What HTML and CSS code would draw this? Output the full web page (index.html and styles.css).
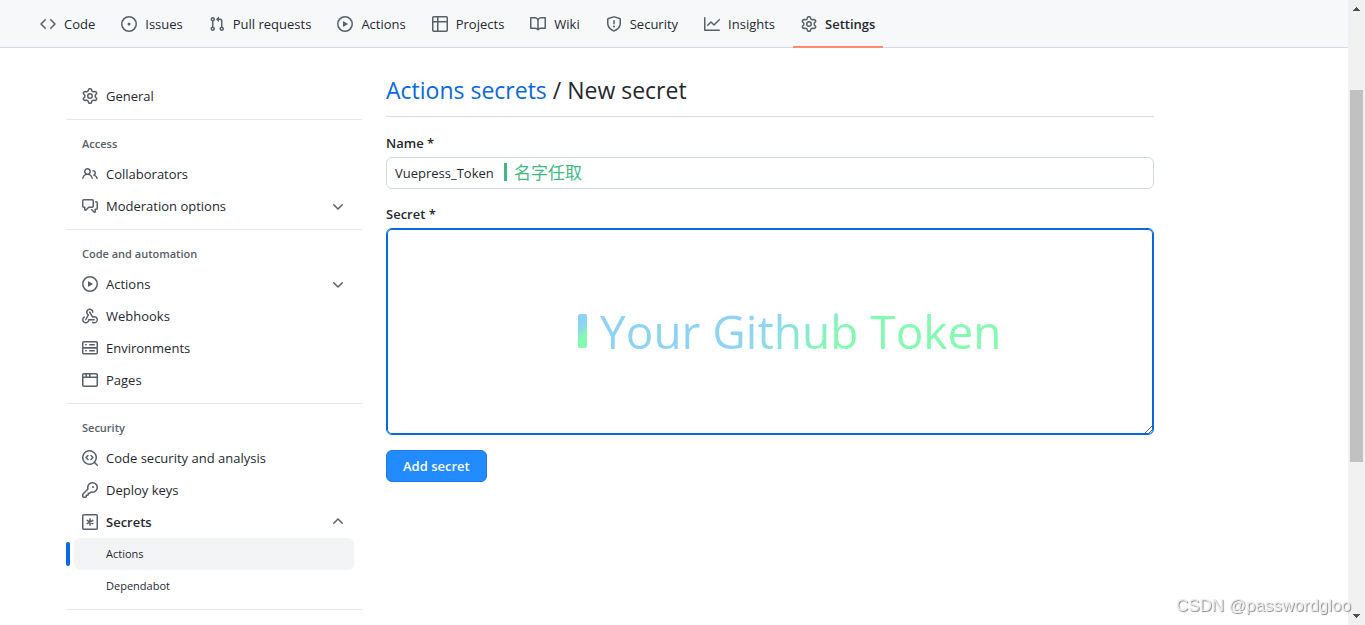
FILE: index.html
```html
<!DOCTYPE html>
<html lang="en">
  <head>
    <meta charset="utf-8" />
    <meta name="viewport" content="width=device-width, initial-scale=1" />
    <link rel="stylesheet" href="styles.css" />
    <title>New secret</title>
  </head>
  <body>
    <svg class="sprite" aria-hidden="true">
      <symbol id="code" viewBox="0 0 16 16"><path d="M4.72 3.22a.75.75 0 011.06 1.06L2.06 8l3.72 3.72a.75.75 0 11-1.06 1.06L.47 8.53a.75.75 0 010-1.06l4.25-4.25zm6.56 0a.75.75 0 10-1.06 1.06L13.94 8l-3.72 3.72a.75.75 0 101.06 1.06l4.25-4.25a.75.75 0 000-1.06l-4.25-4.25z" /></symbol>
      <symbol id="issue" viewBox="0 0 16 16"><path d="M8 9.5a1.5 1.5 0 100-3 1.5 1.5 0 000 3z" /><path d="M8 0a8 8 0 100 16A8 8 0 008 0zM1.5 8a6.5 6.5 0 1113 0 6.5 6.5 0 01-13 0z" fill-rule="evenodd" /></symbol>
      <symbol id="pull" viewBox="0 0 16 16"><path fill-rule="evenodd" d="M7.177 3.073L9.573.677A.25.25 0 0110 .854v4.792a.25.25 0 01-.427.177L7.177 3.427a.25.25 0 010-.354zM3.75 2.5a.75.75 0 100 1.5.75.75 0 000-1.5zm-2.25.75a2.25 2.25 0 113 2.122v5.256a2.251 2.251 0 11-1.5 0V5.372A2.25 2.25 0 011.5 3.25zM11 2.5h-1V4h1a1 1 0 011 1v5.628a2.251 2.251 0 101.5 0V5A2.5 2.5 0 0011 2.5zm1 10.25a.75.75 0 111.5 0 .75.75 0 01-1.5 0zM3.75 12a.75.75 0 100 1.5.75.75 0 000-1.5z" /></symbol>
      <symbol id="play" viewBox="0 0 16 16"><path fill-rule="evenodd" d="M1.5 8a6.5 6.5 0 1113 0 6.5 6.5 0 01-13 0zM8 0a8 8 0 100 16A8 8 0 008 0zM6.379 5.227A.25.25 0 006 5.442v5.117a.25.25 0 00.379.214l4.264-2.559a.25.25 0 000-.428L6.379 5.227z" /></symbol>
      <symbol id="table" viewBox="0 0 16 16"><g fill="none" stroke="currentColor" stroke-width="1.5"><rect x=".75" y=".75" width="14.5" height="14.5" rx="1" /><path d="M.75 5.75h14.5M5.75 .75v14.5" /></g></symbol>
      <symbol id="book" viewBox="0 0 16 16"><path fill-rule="evenodd" d="M0 1.75A.75.75 0 01.75 1h4.253c1.227 0 2.317.59 3 1.501A3.744 3.744 0 0111.006 1h4.245a.75.75 0 01.75.75v10.5a.75.75 0 01-.75.75h-4.507a2.25 2.25 0 00-1.591.659l-.622.621a.75.75 0 01-1.06 0l-.622-.621A2.25 2.25 0 005.258 13H.75a.75.75 0 01-.75-.75V1.75zm8.755 3a2.25 2.25 0 012.25-2.25H14.5v9h-3.757c-.71 0-1.4.201-1.992.572l.004-7.322zm-1.504 7.324l.004-5.073-.002-2.253A2.25 2.25 0 005.003 2.5H1.5v9h3.757a3.75 3.75 0 011.994.574z" /></symbol>
      <symbol id="shield" viewBox="0 0 16 16"><path fill-rule="evenodd" d="M7.467.133a1.75 1.75 0 011.066 0l5.25 1.68A1.75 1.75 0 0115 3.48V7c0 1.566-.32 3.182-1.303 4.682-.983 1.498-2.585 2.813-5.032 3.855a1.7 1.7 0 01-1.33 0c-2.447-1.042-4.049-2.357-5.032-3.855C1.32 10.182 1 8.566 1 7V3.48a1.75 1.75 0 011.217-1.667l5.25-1.68zm.61 1.429a.25.25 0 00-.153 0l-5.25 1.68a.25.25 0 00-.174.238V7c0 1.358.275 2.666 1.057 3.86.784 1.194 2.121 2.34 4.366 3.297a.2.2 0 00.154 0c2.245-.956 3.582-2.104 4.366-3.298C13.225 9.666 13.5 8.36 13.5 7V3.48a.25.25 0 00-.174-.237l-5.25-1.68zM9 10.5a1 1 0 11-2 0 1 1 0 012 0zm-.25-5.75a.75.75 0 10-1.5 0v3a.75.75 0 001.5 0v-3z" /></symbol>
      <symbol id="graph" viewBox="0 0 16 16"><path fill-rule="evenodd" d="M1.5 1.75a.75.75 0 00-1.5 0v12.5c0 .414.336.75.75.75h14.5a.75.75 0 000-1.5H1.5V1.75zm14.28 2.53a.75.75 0 00-1.06-1.06L10 7.94 7.53 5.47a.75.75 0 00-1.06 0L3.22 8.72a.75.75 0 001.06 1.06L7 7.06l2.47 2.47a.75.75 0 001.06 0l5.25-5.25z" /></symbol>
      <symbol id="gear" viewBox="0 0 16 16"><path fill-rule="evenodd" d="M7.429 1.525a6.593 6.593 0 011.142 0c.036.003.108.036.137.146l.289 1.105c.147.56.55.967.997 1.189.174.086.341.183.501.29.417.278.97.423 1.53.27l1.102-.303c.11-.03.175.016.195.046.219.31.41.641.573.989.014.031.022.11-.059.19l-.815.806c-.411.406-.562.957-.53 1.456a4.588 4.588 0 010 .582c-.032.499.119 1.05.53 1.456l.815.806c.08.08.073.159.059.19a6.494 6.494 0 01-.573.99c-.02.029-.086.074-.195.045l-1.103-.303c-.559-.153-1.112-.008-1.529.27-.16.107-.327.204-.5.29-.449.222-.851.628-.998 1.189l-.289 1.105c-.029.11-.101.143-.137.146a6.613 6.613 0 01-1.142 0c-.036-.003-.108-.037-.137-.146l-.289-1.105c-.147-.56-.55-.967-.997-1.189a4.502 4.502 0 01-.501-.29c-.417-.278-.97-.423-1.53-.27l-1.102.303c-.11.03-.175-.016-.195-.046a6.492 6.492 0 01-.573-.989c-.014-.031-.022-.11.059-.19l.815-.806c.411-.406.562-.957.53-1.456a4.587 4.587 0 010-.582c.032-.499-.119-1.05-.53-1.456l-.815-.806c-.08-.08-.073-.159-.059-.19a6.44 6.44 0 01.573-.99c.02-.029.086-.075.195-.045l1.103.303c.559.153 1.112.008 1.529-.27.16-.107.327-.204.5-.29.449-.222.851-.628.998-1.189l.289-1.105c.029-.11.101-.143.137-.146zM8 0c-.236 0-.47.01-.701.03-.743.065-1.29.615-1.458 1.261l-.29 1.106c-.017.066-.078.158-.211.224a5.994 5.994 0 00-.668.386c-.123.082-.233.09-.3.071L3.27 2.776c-.644-.177-1.392.02-1.82.63a7.977 7.977 0 00-.704 1.217c-.315.675-.111 1.422.363 1.891l.815.806c.05.048.098.147.088.294a6.084 6.084 0 000 .772c.01.147-.038.246-.088.294l-.815.806c-.474.469-.678 1.216-.363 1.891.2.428.436.835.704 1.218.428.609 1.176.806 1.82.63l1.103-.303c.066-.019.176-.011.299.071.213.143.436.272.668.386.133.066.194.158.212.224l.289 1.106c.169.646.715 1.196 1.458 1.26a8.094 8.094 0 001.402 0c.743-.064 1.29-.614 1.458-1.26l.29-1.106c.017-.066.078-.158.211-.224a5.98 5.98 0 00.668-.386c.123-.082.233-.09.3-.071l1.102.302c.644.177 1.392-.02 1.82-.63.268-.382.505-.789.704-1.217.315-.675.111-1.422-.364-1.891l-.814-.806c-.05-.048-.098-.147-.088-.294a6.1 6.1 0 000-.772c-.01-.147.039-.246.088-.294l.814-.806c.475-.469.679-1.216.364-1.891a7.992 7.992 0 00-.704-1.218c-.428-.609-1.176-.806-1.82-.63l-1.103.303c-.066.019-.176.011-.299-.071a5.991 5.991 0 00-.668-.386c-.133-.066-.194-.158-.212-.224L10.16 1.29C9.99.645 9.444.095 8.701.031A8.094 8.094 0 008 0zm1.5 8a1.5 1.5 0 11-3 0 1.5 1.5 0 013 0zM11 8a3 3 0 11-6 0 3 3 0 016 0z" /></symbol>
      <symbol id="people" viewBox="0 0 16 16"><path fill-rule="evenodd" d="M5.5 3.5a2 2 0 100 4 2 2 0 000-4zM2 5.5a3.5 3.5 0 115.898 2.549 5.507 5.507 0 013.034 4.084.75.75 0 11-1.482.235 4.001 4.001 0 00-7.9 0 .75.75 0 01-1.482-.236A5.507 5.507 0 013.102 8.05 3.49 3.49 0 012 5.5zM11 4a.75.75 0 100 1.5 1.5 1.5 0 01.666 2.844.75.75 0 00-.416.672v.352a.75.75 0 00.574.73c1.2.289 2.162 1.2 2.522 2.372a.75.75 0 101.434-.44 5.01 5.01 0 00-2.56-3.012A3 3 0 0011 4z" /></symbol>
      <symbol id="comments" viewBox="0 0 16 16"><path fill-rule="evenodd" d="M1.5 2.75a.25.25 0 01.25-.25h8.5a.25.25 0 01.25.25v5.5a.25.25 0 01-.25.25h-3.5a.75.75 0 00-.53.22L3.5 11.44V9.25a.75.75 0 00-.75-.75h-1a.25.25 0 01-.25-.25v-5.5zM1.75 1A1.75 1.75 0 000 2.75v5.5C0 9.216.784 10 1.75 10H2v1.543a1.457 1.457 0 002.487 1.03L7.061 10h3.189A1.75 1.75 0 0012 8.25v-5.5A1.75 1.75 0 0010.25 1h-8.5zM14.5 4.75a.25.25 0 00-.25-.25h-.5a.75.75 0 110-1.5h.5c.966 0 1.75.784 1.75 1.75v5.5A1.75 1.75 0 0114.25 12H14v1.543a1.457 1.457 0 01-2.487 1.03L9.22 12.28a.75.75 0 111.06-1.06l2.22 2.22v-2.19a.75.75 0 01.75-.75h1a.25.25 0 00.25-.25v-5.5z" /></symbol>
      <symbol id="webhook" viewBox="0 0 16 16"><path d="M5.5 4.25a2.25 2.25 0 014.5 0 .75.75 0 001.5 0 3.75 3.75 0 10-6.14 2.889l-2.272 4.258a.75.75 0 001.324.706L7 7.25a.75.75 0 00-.309-1.015A2.25 2.25 0 015.5 4.25z" /><path d="M7.364 3.607a.75.75 0 011.03.257l2.608 4.349a3.75 3.75 0 11-.628 6.785.75.75 0 01.752-1.299 2.25 2.25 0 10-.033-3.88.75.75 0 01-1.03-.256L7.107 4.636a.75.75 0 01.257-1.03z" /><path d="M2.9 8.776A.75.75 0 012.625 9.8 2.25 2.25 0 106 11.75a.75.75 0 01.75-.751h5.5a.75.75 0 010 1.5H7.425a3.751 3.751 0 11-5.55-3.998.75.75 0 011.024.274z" /></symbol>
      <symbol id="server" viewBox="0 0 16 16"><g fill="none" stroke="currentColor" stroke-width="1.5"><rect x=".75" y="1.75" width="14.5" height="6" rx="1" /><rect x=".75" y="7.75" width="14.5" height="6" rx="1" /><path stroke-linecap="round" d="M3.75 4.75h.5M7.75 4.75h4.5M3.75 10.75h.5M7.75 10.75h4.5" /></g></symbol>
      <symbol id="browser" viewBox="0 0 16 16"><path fill-rule="evenodd" d="M0 2.75C0 1.784.784 1 1.75 1h12.5c.966 0 1.75.784 1.75 1.75v10.5A1.75 1.75 0 0114.25 15H1.75A1.75 1.75 0 010 13.25V2.75zm1.75-.25a.25.25 0 00-.25.25V4.5h2v-2H1.75zM5 2.5v2h2v-2H5zm3.5 0v2h6V2.75a.25.25 0 00-.25-.25H8.5zm6 3.5h-13v7.25c0 .138.112.25.25.25h12.5a.25.25 0 00.25-.25V6z" /></symbol>
      <symbol id="codescan" viewBox="0 0 16 16"><path d="M8.47 4.97a.75.75 0 000 1.06L9.94 7.5 8.47 8.97a.75.75 0 101.06 1.06l2-2a.75.75 0 000-1.06l-2-2a.75.75 0 00-1.06 0zM6.53 6.03a.75.75 0 00-1.06-1.06l-2 2a.75.75 0 000 1.06l2 2a.75.75 0 101.06-1.06L5.06 7.5l1.47-1.47z" /><path fill-rule="evenodd" d="M12.246 13.307a7.5 7.5 0 111.06-1.06l2.474 2.473a.75.75 0 11-1.06 1.06l-2.474-2.473zM1.5 7.5a6 6 0 1110.386 4.094.75.75 0 00-.292.293A6 6 0 011.5 7.5z" /></symbol>
      <symbol id="key" viewBox="0 0 16 16"><path fill-rule="evenodd" d="M6.5 5.5a4 4 0 112.731 3.795.75.75 0 00-.768.18L7.44 10.5H6.25a.75.75 0 00-.75.75v1.19l-.06.06H4.25a.75.75 0 00-.75.75v1.19l-.06.06H1.75a.25.25 0 01-.25-.25v-1.69l5.024-5.023a.75.75 0 00.181-.768A3.995 3.995 0 016.5 5.5zm4-5.5a5.5 5.5 0 00-5.348 6.788L.22 11.72a.75.75 0 00-.22.53v2C0 15.216.784 16 1.75 16h2a.75.75 0 00.53-.22l.5-.5a.75.75 0 00.22-.53V14h.75a.75.75 0 00.53-.22l.5-.5a.75.75 0 00.22-.53V12h.75a.75.75 0 00.53-.22l.932-.932A5.5 5.5 0 1010.5 0zm.5 6a1 1 0 100-2 1 1 0 000 2z" /></symbol>
      <symbol id="asterisk" viewBox="0 0 16 16"><g fill="none" stroke="currentColor" stroke-width="1.5"><rect x=".75" y=".75" width="14.5" height="14.5" rx="1" /><path stroke-linecap="round" d="M8 4.75v6.5M5.2 6.4l5.6 3.2M10.8 6.4L5.2 9.6" /></g></symbol>
      <symbol id="down" viewBox="0 0 16 16"><path d="M12.78 6.22a.75.75 0 010 1.06l-4.25 4.25a.75.75 0 01-1.06 0L3.22 7.28a.75.75 0 011.06-1.06L8 9.94l3.72-3.72a.75.75 0 011.06 0z" /></symbol>
      <symbol id="up" viewBox="0 0 16 16"><path d="M3.22 9.78a.75.75 0 010-1.06l4.25-4.25a.75.75 0 011.06 0l4.25 4.25a.75.75 0 01-1.06 1.06L8 6.06 4.28 9.78a.75.75 0 01-1.06 0z" /></symbol>
    </svg>

    <div class="page">
      <nav class="tabs" aria-label="Repository">
        <a class="tab" href="#"><svg class="icon"><use href="#code" /></svg>Code</a>
        <a class="tab" href="#"><svg class="icon"><use href="#issue" /></svg>Issues</a>
        <a class="tab" href="#"><svg class="icon"><use href="#pull" /></svg>Pull requests</a>
        <a class="tab" href="#"><svg class="icon"><use href="#play" /></svg>Actions</a>
        <a class="tab" href="#"><svg class="icon"><use href="#table" /></svg>Projects</a>
        <a class="tab" href="#"><svg class="icon"><use href="#book" /></svg>Wiki</a>
        <a class="tab" href="#"><svg class="icon"><use href="#shield" /></svg>Security</a>
        <a class="tab" href="#"><svg class="icon"><use href="#graph" /></svg>Insights</a>
        <a class="tab selected" href="#" aria-current="page"><svg class="icon"><use href="#gear" /></svg>Settings</a>
      </nav>

      <div class="container">
        <nav class="sidebar" aria-label="Settings">
          <ul class="group">
            <li><a class="item" href="#"><svg class="icon"><use href="#gear" /></svg>General</a></li>
          </ul>
          <div class="group">
            <h3 class="group-title">Access</h3>
            <ul>
              <li><a class="item" href="#"><svg class="icon"><use href="#people" /></svg>Collaborators</a></li>
              <li><button class="item" type="button"><svg class="icon"><use href="#comments" /></svg>Moderation options<svg class="icon chevron"><use href="#down" /></svg></button></li>
            </ul>
          </div>
          <div class="group">
            <h3 class="group-title">Code and automation</h3>
            <ul>
              <li><button class="item" type="button"><svg class="icon"><use href="#play" /></svg>Actions<svg class="icon chevron"><use href="#down" /></svg></button></li>
              <li><a class="item" href="#"><svg class="icon"><use href="#webhook" /></svg>Webhooks</a></li>
              <li><a class="item" href="#"><svg class="icon"><use href="#server" /></svg>Environments</a></li>
              <li><a class="item" href="#"><svg class="icon"><use href="#browser" /></svg>Pages</a></li>
            </ul>
          </div>
          <div class="group">
            <h3 class="group-title">Security</h3>
            <ul>
              <li><a class="item" href="#"><svg class="icon"><use href="#codescan" /></svg>Code security and analysis</a></li>
              <li><a class="item" href="#"><svg class="icon"><use href="#key" /></svg>Deploy keys</a></li>
              <li>
                <button class="item open" type="button" aria-expanded="true"><svg class="icon"><use href="#asterisk" /></svg>Secrets<svg class="icon chevron"><use href="#up" /></svg></button>
                <ul>
                  <li><a class="item sub current" href="#" aria-current="page">Actions</a></li>
                  <li><a class="item sub" href="#">Dependabot</a></li>
                </ul>
              </li>
            </ul>
          </div>
        </nav>

        <main class="content">
          <h2 class="title"><a href="#">Actions secrets</a> / New secret</h2>
          <form class="secret-form">
            <div class="field">
              <label for="name">Name *</label>
              <div class="control">
                <input type="text" id="name" value="Vuepress_Token" />
                <span class="note">名字任取</span>
              </div>
            </div>
            <div class="field">
              <label for="secret">Secret *</label>
              <div class="control">
                <textarea id="secret"></textarea>
                <div class="banner"><span class="banner-bar"></span><span class="banner-text">Your Github Token</span></div>
              </div>
            </div>
            <button class="submit" type="submit">Add secret</button>
          </form>
        </main>
      </div>
    </div>

    <div class="scrollbar" aria-hidden="true">
      <svg class="arrow" viewBox="0 0 7 4"><path d="M3 0h1v1h1v1h1v1h1v1H0V3h1V2h1V1h1z" /></svg>
      <div class="track"><div class="thumb"></div></div>
      <svg class="arrow" viewBox="0 0 7 4"><path d="M0 0h7v1H6v1H5v1H4v1H3V3H2V2H1V1H0z" /></svg>
    </div>

    <div class="watermark">CSDN @passwordgloo</div>
  </body>
</html>
```

FILE: styles.css
```css
*,
*::before,
*::after {
  box-sizing: border-box;
}
body {
  margin: 0;
  display: flex;
  height: 100vh;
  overflow: hidden;
  background: #fff;
  color: #24292f;
  font: 13px/20px "Open Sans", "Noto Sans", "Noto Sans CJK SC", sans-serif;
}
ul {
  list-style: none;
  margin: 0;
  padding: 0;
}
a {
  color: inherit;
  text-decoration: none;
}
button,
input,
textarea {
  font: inherit;
  color: inherit;
  margin: 0;
}
.sprite {
  display: none;
}
.icon {
  flex: none;
  width: 16px;
  height: 16px;
  margin-right: 8px;
  color: #57606a;
  fill: currentColor;
}
.page {
  flex: 1;
  min-width: 0;
}

/* Top tabs */
.tabs {
  display: flex;
  gap: 10px;
  height: 48px;
  padding: 0 32px;
  background: #f6f8fa;
  border-bottom: 1px solid #d5dae0;
}
.tab {
  display: flex;
  align-items: center;
  height: 48px;
  padding: 0 8px;
  white-space: nowrap;
  border-bottom: 2px solid transparent;
  border-top: 2px solid transparent;
}
.tab.selected {
  font-weight: 600;
  border-bottom-color: #fd8c73;
}

/* Layout */
.container {
  display: flex;
  gap: 24px;
  max-width: 1280px;
  margin: 0 auto;
  padding: 24px 32px;
}
.sidebar {
  flex: none;
  width: 296px;
}
.content {
  flex: 1;
  max-width: 768px;
}

/* Sidebar */
.group {
  padding: 8px 0 7px;
  border-bottom: 1px solid #e6e9ec;
}
.group-title {
  margin: 0;
  padding: 7px 16px 5px;
  color: #57606a;
  font-size: 11px;
  font-weight: 600;
  line-height: 18px;
}
.item {
  display: flex;
  align-items: center;
  width: 280px;
  height: 32px;
  margin: 0 8px;
  padding: 0 8px;
  border: 0;
  border-radius: 6px;
  background: none;
  text-align: left;
}
.item.open {
  font-weight: 600;
}
.item.sub {
  padding-left: 32px;
  font-size: 11px;
}
.item.current {
  position: relative;
  background: #f3f4f6;
}
.item.current::before {
  content: "";
  position: absolute;
  left: -8px;
  top: 4px;
  width: 4px;
  height: 24px;
  border-radius: 2px;
  background: #0969da;
}
.chevron {
  margin: 0 0 0 auto;
}

/* Form */
.title {
  margin: 0 0 16px;
  padding: 2px 0 10px;
  border-bottom: 1px solid #d8dee4;
  font-size: 23px;
  font-weight: 400;
  line-height: 32px;
}
.title a {
  color: #0969da;
}
.field {
  margin-bottom: 15px;
}
.field label {
  display: block;
  margin-bottom: 4px;
  font-weight: 600;
}
.control {
  position: relative;
}
.control input,
.control textarea {
  display: block;
  width: 100%;
  padding: 5px 8px;
  border: 1px solid #d0d7de;
  border-radius: 6px;
  background: #fff;
  outline: 0;
}
.control input {
  height: 32px;
}
.control textarea {
  height: 207px;
  border-color: #0969da;
  box-shadow: inset 0 0 0 1px #0969da;
  resize: vertical;
}
.note {
  position: absolute;
  left: 118px;
  top: 6px;
  padding-left: 7px;
  border-left: 3px solid #42b983;
  color: #42b983;
  font: 17px/18px "Noto Sans CJK SC", sans-serif;
}
.banner {
  position: absolute;
  inset: 0 0 2px 25%;
  display: flex;
  align-items: center;
  gap: 13px;
  pointer-events: none;
}
.banner-bar {
  width: 9px;
  height: 34px;
  border-radius: 2px;
  background: linear-gradient(135deg, #8fd3f4 35%, #84fab0 65%);
}
.banner-text {
  background: linear-gradient(135deg, #8fd3f4 40%, #84fab0 60%);
  -webkit-background-clip: text;
  background-clip: text;
  color: transparent;
  font-size: 46px;
  line-height: 64px;
}
.submit {
  height: 32px;
  padding: 0 16px;
  border: 1px solid #1f7ae8;
  border-radius: 6px;
  background: #218bff;
  color: #fff;
  font-weight: 600;
}

/* Scrollbar */
.scrollbar {
  flex: none;
  display: flex;
  flex-direction: column;
  align-items: center;
  width: 17px;
  padding: 7px 0;
  background: #f1f1f1;
}
.arrow {
  flex: none;
  width: 7px;
  height: 4px;
  fill: #505050;
}
.track {
  flex: 1;
  width: 13px;
  padding-top: 79px;
}
.thumb {
  height: 71%;
  background: #c1c1c1;
}

.watermark {
  position: fixed;
  right: 14px;
  bottom: 8px;
  color: #eee;
  font: 17px/22px "Liberation Sans", sans-serif;
  text-shadow: 1px 1px 1px #888;
}
```
